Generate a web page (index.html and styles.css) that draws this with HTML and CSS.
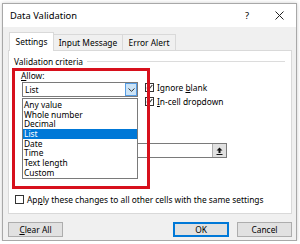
FILE: index.html
```html
<!DOCTYPE html>
<html lang="en">
<head>
    <meta charset="UTF-8">
    <title>Data Validation</title>
    <link rel="stylesheet" href="styles.css">
</head>
<body>

    <div class="dialog">
        <div class="titlebar">
            <span class="title">Data Validation</span>
            <span class="help">?</span>
            <span class="close">
                <svg width="9" height="9" viewBox="0 0 9 9"><path d="M0.5 0.5 L8.5 8.5 M8.5 0.5 L0.5 8.5" stroke="#222" stroke-width="1"/></svg>
            </span>
        </div>

        <div class="content">
            <div class="tabs">
                <div class="tab tab-settings active">Settings</div>
                <div class="tab tab-input">Input Message</div>
                <div class="tab tab-error">Error Alert</div>
            </div>

            <div class="panel">
                <div class="group-title"><span>Validation criteria</span></div>

                <div class="criteria">
                    <div class="allow-col">
                        <div class="field-label"><u>A</u>llow:</div>
                        <div class="select">
                            <span class="select-value">List</span>
                            <span class="select-btn">
                                <svg width="7" height="4" viewBox="0 0 7 4"><path d="M0.5 0.5 L3.5 3.3 L6.5 0.5" fill="none" stroke="#333" stroke-width="1"/></svg>
                            </span>
                        </div>
                    </div>
                    <div class="checks">
                        <div class="check">
                            <span class="box">
                                <svg width="7" height="7" viewBox="0 0 7 7"><path d="M0.8 3.6 L2.7 5.5 L6.3 1" fill="none" stroke="#333" stroke-width="1.1"/></svg>
                            </span>
                            Ignore&nbsp;<u>b</u>lank
                        </div>
                        <div class="check">
                            <span class="box">
                                <svg width="7" height="7" viewBox="0 0 7 7"><path d="M0.8 3.6 L2.7 5.5 L6.3 1" fill="none" stroke="#333" stroke-width="1.1"/></svg>
                            </span>
                            <u>I</u>n-cell dropdown
                        </div>
                    </div>
                </div>

                <!-- source field, mostly covered by the open list -->
                <div class="source-input">
                    <span class="range-btn">
                        <svg width="7" height="8" viewBox="0 0 7 8"><path d="M3.5 0.5 L6.5 3.5 L4.5 3.5 L4.5 6 L2.5 6 L2.5 3.5 L0.5 3.5 Z" fill="#111"/><rect x="0.5" y="7" width="6" height="1" fill="#111"/></svg>
                    </span>
                </div>

                <div class="apply">
                    <span class="box"></span>
                    Ap<u>p</u>ly these changes to all other cells with the same settings
                </div>

                <!-- open dropdown of the Allow box -->
                <ul class="dropdown-list">
                    <li>Any value</li>
                    <li>Whole number</li>
                    <li>Decimal</li>
                    <li class="selected">List</li>
                    <li>Date</li>
                    <li>Time</li>
                    <li>Text length</li>
                    <li>Custom</li>
                </ul>

                <div class="highlight"></div>
            </div>

            <div class="buttons">
                <button class="btn btn-clear"><u>C</u>lear All</button>
                <button class="btn btn-ok">OK</button>
                <button class="btn btn-cancel">Cancel</button>
            </div>
        </div>
    </div>

</body>
</html>
```

FILE: styles.css
```css
* {
    box-sizing: border-box;
}
body {
    margin: 0;
    padding: 3px 0 0 2px;
    background-color: #fff;
    font-family: "Noto Sans", "Open Sans", sans-serif;
    font-size: 8.4px;
    color: #000;
}
u {
    text-decoration-thickness: 1px;
    text-underline-offset: 1px;
}
.dialog {
    width: 295px;
    height: 238px;
    border: 1px solid #a8a8a8;
    background-color: #f0f0f0;
    box-shadow: 0 0 4px rgba(0, 0, 0, 0.2);
}
.titlebar {
    height: 23px;
    display: flex;
    align-items: center;
    background-color: #fff;
    padding-left: 7px;
}
.title {
    flex: 1;
    font-size: 9.4px;
}
.help {
    width: 30px;
    text-align: center;
    font-size: 9.4px;
}
.close {
    width: 34px;
    display: flex;
    justify-content: center;
}
.content {
    padding: 5px 4px 0 5px;
}
.tabs {
    height: 18px;
    display: flex;
    align-items: flex-end;
    padding-left: 1px;
}
.tab {
    height: 16px;
    line-height: 15px;
    text-align: center;
    border: 1px solid #d9d9d9;
    border-bottom: none;
    background-color: #f0f0f0;
}
.tab + .tab {
    margin-left: -1px;
}
.tab.active {
    height: 19px;
    line-height: 17px;
    margin-bottom: -1px;
    background-color: #fff;
    position: relative;
    z-index: 2;
}
.tab-settings {
    width: 45px;
}
.tab-input {
    width: 70px;
}
.tab-error {
    width: 54px;
}
.panel {
    height: 164px;
    border: 1px solid #d9d9d9;
    background-color: #fff;
    position: relative;
}
.group-title {
    display: flex;
    align-items: center;
    height: 12px;
    margin-top: 4px;
    padding-left: 5px;
}
.group-title::after {
    content: "";
    flex: 1;
    height: 1px;
    background-color: #dcdcdc;
    margin: 0 6px 0 4px;
}
.criteria {
    display: flex;
    margin-top: 2px;
}
.allow-col {
    width: 118px;
    margin-left: 12px;
}
.field-label {
    height: 13px;
    line-height: 13px;
}
.select {
    width: 116px;
    height: 15px;
    margin-left: 1px;
    border: 1px solid #7a7a7a;
    display: flex;
    align-items: center;
}
.select-value {
    flex: 1;
    padding-left: 2px;
}
.select-btn {
    width: 12px;
    height: 13px;
    background-color: #cce4f7;
    border: 1px solid #569de5;
    display: flex;
    align-items: center;
    justify-content: center;
}
.checks {
    margin-left: 6px;
    padding-top: 11px;
}
.check {
    height: 14px;
    display: flex;
    align-items: center;
}
.box {
    width: 9px;
    height: 9px;
    border: 1px solid #333;
    background-color: #fff;
    display: inline-flex;
    align-items: center;
    justify-content: center;
    margin-right: 3px;
}
.source-input {
    width: 205px;
    height: 15px;
    margin-top: 35px;
    margin-left: 13px;
    border: 1px solid #7a7a7a;
    display: flex;
    justify-content: flex-end;
}
.range-btn {
    width: 14px;
    height: 13px;
    background-color: #e1e1e1;
    border-left: 1px solid #adadad;
    display: flex;
    align-items: center;
    justify-content: center;
}
.apply {
    height: 12px;
    margin-top: 35px;
    padding-left: 6px;
    display: flex;
    align-items: center;
}
.dropdown-list {
    position: absolute;
    left: 13px;
    top: 47px;
    width: 116px;
    height: 81px;
    margin: 0;
    padding: 1px 0 0 0;
    list-style: none;
    border: 1px solid #7a7a7a;
    background-color: #fff;
    z-index: 3;
}
.dropdown-list li {
    height: 9.7px;
    line-height: 9.7px;
    padding-left: 1px;
}
.dropdown-list li.selected {
    background-color: #0078d7;
    color: #fff;
}
.highlight {
    position: absolute;
    left: 3px;
    top: 17px;
    width: 138px;
    height: 121px;
    border: 3px solid #d7101c;
    z-index: 4;
}
.buttons {
    display: flex;
    margin-top: 8px;
}
.btn {
    height: 15px;
    padding: 0;
    font-family: inherit;
    font-size: 8.4px;
    line-height: 13px;
    color: #000;
    background-color: #e1e1e1;
    border: 1px solid #adadad;
}
.btn-clear {
    width: 55px;
}
.btn-ok {
    width: 56px;
    margin-left: auto;
    border-color: #0078d7;
    box-shadow: inset 0 0 0 1px #0078d7;
}
.btn-cancel {
    width: 55px;
    margin-left: 8px;
}
```
